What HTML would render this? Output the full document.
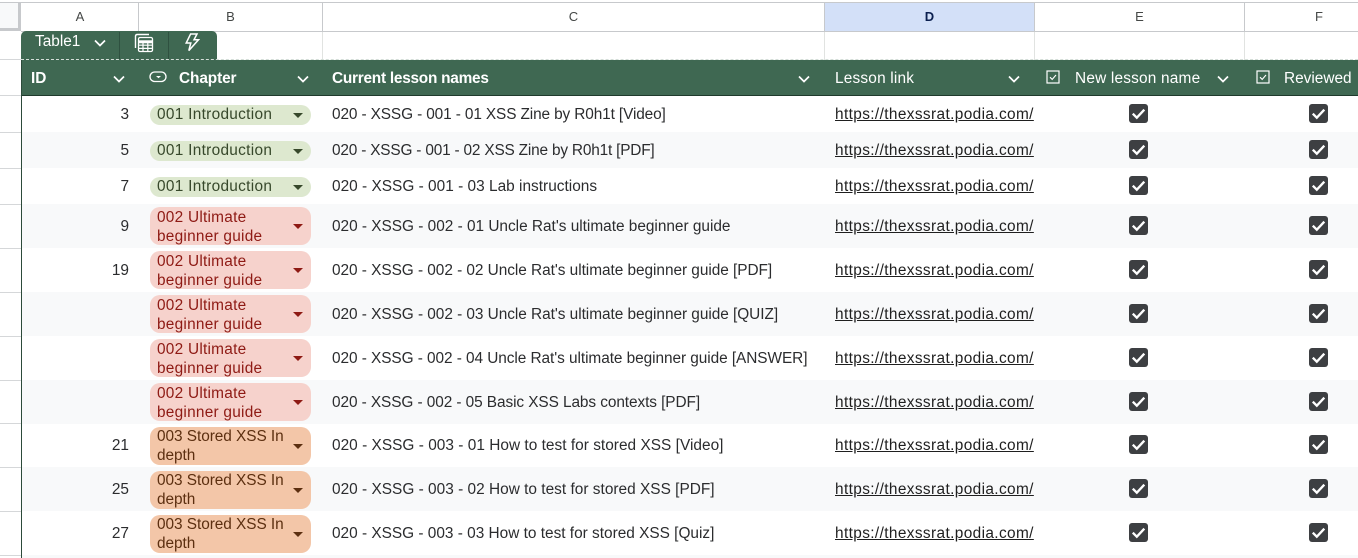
<!DOCTYPE html>
<html><head><meta charset="utf-8"><style>
html,body{margin:0;padding:0;width:1358px;height:558px;overflow:hidden;background:#fff}
body{position:relative;font-family:"Liberation Sans",sans-serif;color:#202124}
div,span,svg{position:absolute}
.l{background:#e1e3e1}.hl{background:#c7c9cc}
.cl{top:3px;height:28px;font-size:13px;line-height:28px;text-align:center;color:#444746}
.r{left:22px;width:1336px;overflow:hidden;height:36px;line-height:37px}
.r.w{height:44px;line-height:45px}
.r.s{background:#f8f9fa}
.t{font-size:15.4px;white-space:nowrap;color:#2b2c2e}
.id{width:107px;left:0;text-align:right}
.n{left:310px;letter-spacing:-.06px}
.u{left:813px;width:199px;overflow:hidden;text-decoration:underline;color:#1f1f1f;letter-spacing:.38px}
.p{left:128px;width:161px;border-radius:10px;font-size:15.4px;line-height:19px;white-space:nowrap}
.p span{left:7px;top:0}
.p i{position:absolute;right:8px;top:50%;margin-top:-2px;border:5px solid transparent;border-bottom:0;border-top-color:currentColor}
.g{background:#dde8cf;color:#37482b;height:20px;top:9px;line-height:20px;letter-spacing:.3px}
.d{background:#f6d2cc;color:#8e1a14;height:38px;top:3px;letter-spacing:.25px}
.o{background:#f3c6a8;color:#5c2f10;height:38px;top:4px;letter-spacing:-.05px}
.d span{top:1px}
.h{top:60px;left:21px;width:1337px;height:35px;background:#3f6852}
.ht{color:#fff;font-size:15.4px;line-height:38px;white-space:nowrap;top:0}
.b{font-weight:bold}
.cb{width:19px;height:19px;background:#3d3f42;border-radius:3px;top:8px}
.w .cb{top:12px}
.e{left:1107px}.f{left:1287px}
.gl{left:0;width:21px;height:1px;background:#d5d7d9}
</style></head><body>
<svg width="0" height="0" style="left:0;top:0"><defs>
<symbol id="chev" viewBox="0 0 12 8"><path d="M1 1.5 6 6.5 11 1.5" fill="none" stroke="#fff" stroke-width="1.7"/></symbol>
<symbol id="ck" viewBox="0 0 18 18"><path d="M3.6 9.2 7.4 13 14.5 5.4" fill="none" stroke="#fff" stroke-width="2.2"/></symbol>
<symbol id="hck" viewBox="0 0 14 14"><rect x="1" y="1" width="12" height="12" fill="none" stroke="#fff" stroke-width="1.2"/><path d="M4 7.2 6.2 9.4 10 5" fill="none" stroke="#fff" stroke-width="1.1"/></symbol>
</defs></svg>

<div style="left:0;top:2px;width:18px;height:26px;background:#f8f9fa;border-right:3px solid #c7c9cc;border-bottom:3px solid #c7c9cc"></div>
<div style="left:825px;top:3px;width:209px;height:28px;background:#d3e0f8"></div>
<div class="hl" style="left:0;top:2px;width:1358px;height:1px"></div>
<div class="hl" style="left:21px;top:31px;width:1337px;height:1px"></div>
<div class="cl" style="left:22px;width:116px">A</div>
<div class="cl" style="left:139px;width:183px">B</div>
<div class="cl" style="left:323px;width:501px">C</div>
<div class="cl" style="left:825px;width:209px;font-weight:bold;color:#0b1f4f">D</div>
<div class="cl" style="left:1035px;width:209px">E</div>
<div class="cl" style="left:1245px;width:148px">F</div>
<div class="hl" style="left:138px;top:3px;width:1px;height:28px"></div>
<div class="hl" style="left:322px;top:3px;width:1px;height:28px"></div>
<div class="hl" style="left:824px;top:3px;width:1px;height:28px"></div>
<div class="hl" style="left:1034px;top:3px;width:1px;height:28px"></div>
<div class="hl" style="left:1244px;top:3px;width:1px;height:28px"></div>
<div class="l" style="left:322px;top:32px;width:1px;height:28px"></div>
<div class="l" style="left:824px;top:32px;width:1px;height:28px"></div>
<div class="l" style="left:1034px;top:32px;width:1px;height:28px"></div>
<div class="l" style="left:1244px;top:32px;width:1px;height:28px"></div>

<div class="gl" style="top:59px"></div>
<div class="gl" style="top:95px"></div>
<div class="gl" style="top:132px"></div>
<div class="gl" style="top:168px"></div>
<div class="gl" style="top:204px"></div>
<div class="gl" style="top:248px"></div>
<div class="gl" style="top:292px"></div>
<div class="gl" style="top:336px"></div>
<div class="gl" style="top:380px"></div>
<div class="gl" style="top:423px"></div>
<div class="gl" style="top:467px"></div>
<div class="gl" style="top:511px"></div>
<div class="gl" style="top:555px"></div>

<div style="left:21px;top:31px;width:196px;height:29px;background:#3f6852;border-radius:5px 5px 0 0"></div>
<div style="left:119px;top:32px;width:1px;height:27px;background:#2f5140"></div>
<div style="left:168px;top:32px;width:1px;height:27px;background:#2f5140"></div>
<div class="ht" style="left:35px;top:23px">Table1</div>
<svg style="left:94px;top:39px" width="12" height="8"><use href="#chev"/></svg>
<svg style="left:134px;top:33px" width="20" height="20" viewBox="0 0 20 20" fill="none" stroke="#fff"><path d="M1.5 15V3.2Q1.5 1.5 3.2 1.5H15" stroke-width="1.4"/><rect x="4.5" y="4.5" width="14" height="14" rx="1.5" stroke-width="1.3"/><path d="M4.5 8.8H18.5" stroke-width="3"/><path d="M5 12.2H18M5 15.4H18M9 10V18M13.8 10V18" stroke-width="1.2"/></svg>
<svg style="left:184px;top:33px" width="16" height="19" viewBox="0 0 16 19" fill="none" stroke="#fff" stroke-width="1.5"><path d="M6.6 1H13L10 6.8H14.5L4.8 17.6 6.8 10H2.2Z"/></svg>

<div class="h"></div>
<div style="left:21px;top:59px;width:1337px;height:0;border-top:1px dashed #d4ded8"></div>
<div style="left:21px;top:95px;width:1337px;height:1px;background:#1f3a2c"></div>
<div style="left:21px;top:60px;width:1337px;height:36px">
<div class="ht b" style="left:10px">ID</div>
<svg style="left:92px;top:15px" width="12" height="8"><use href="#chev"/></svg>
<svg style="left:128px;top:10px" width="18" height="14" viewBox="0 0 18 14" fill="none" stroke="#fff" stroke-width="1.3"><rect x="1" y="2" width="16" height="9.5" rx="4.7"/><path d="M7 6H12L9.5 8.3Z" fill="#fff" stroke="none"/></svg>
<div class="ht b" style="left:158px;letter-spacing:-.1px">Chapter</div>
<svg style="left:276px;top:15px" width="12" height="8"><use href="#chev"/></svg>
<div class="ht b" style="left:311px;letter-spacing:-.25px">Current lesson names</div>
<svg style="left:777px;top:15px" width="12" height="8"><use href="#chev"/></svg>
<div class="ht" style="left:814px;letter-spacing:.2px">Lesson link</div>
<svg style="left:987px;top:15px" width="12" height="8"><use href="#chev"/></svg>
<svg style="left:1025px;top:10px" width="14" height="14"><use href="#hck"/></svg>
<div class="ht" style="left:1054px;letter-spacing:.2px">New lesson name</div>
<svg style="left:1196px;top:15px" width="12" height="8"><use href="#chev"/></svg>
<svg style="left:1235px;top:10px" width="14" height="14"><use href="#hck"/></svg>
<div class="ht" style="left:1263px">Reviewed</div>
</div>

<div class="r" style="top:96px">
<span class="t id">3</span><div class="p g"><span>001 Introduction</span><i></i></div><span class="t n" style="letter-spacing:-.12px">020 - XSSG - 001 - 01 XSS Zine by R0h1t [Video]</span><span class="t u">https://thexssrat.podia.com/</span><div class="cb e"><svg width="19" height="19"><use href="#ck"/></svg></div><div class="cb f"><svg width="19" height="19"><use href="#ck"/></svg></div></div>

<div class="r s" style="top:132px">
<span class="t id">5</span><div class="p g"><span>001 Introduction</span><i></i></div><span class="t n" style="letter-spacing:-.19px">020 - XSSG - 001 - 02 XSS Zine by R0h1t [PDF]</span><span class="t u">https://thexssrat.podia.com/</span><div class="cb e"><svg width="19" height="19"><use href="#ck"/></svg></div><div class="cb f"><svg width="19" height="19"><use href="#ck"/></svg></div></div>

<div class="r" style="top:168px">
<span class="t id">7</span><div class="p g"><span>001 Introduction</span><i></i></div><span class="t n" style="letter-spacing:.02px">020 - XSSG - 001 - 03 Lab instructions</span><span class="t u">https://thexssrat.podia.com/</span><div class="cb e"><svg width="19" height="19"><use href="#ck"/></svg></div><div class="cb f"><svg width="19" height="19"><use href="#ck"/></svg></div></div>

<div class="r w s" style="top:204px">
<span class="t id">9</span><div class="p d"><span>002 Ultimate<br>beginner guide</span><i></i></div><span class="t n" style="letter-spacing:-.01px">020 - XSSG - 002 - 01 Uncle Rat's ultimate beginner guide</span><span class="t u">https://thexssrat.podia.com/</span><div class="cb e"><svg width="19" height="19"><use href="#ck"/></svg></div><div class="cb f"><svg width="19" height="19"><use href="#ck"/></svg></div></div>

<div class="r w" style="top:248px">
<span class="t id">19</span><div class="p d"><span>002 Ultimate<br>beginner guide</span><i></i></div><span class="t n" style="letter-spacing:-.04px">020 - XSSG - 002 - 02 Uncle Rat's ultimate beginner guide [PDF]</span><span class="t u">https://thexssrat.podia.com/</span><div class="cb e"><svg width="19" height="19"><use href="#ck"/></svg></div><div class="cb f"><svg width="19" height="19"><use href="#ck"/></svg></div></div>

<div class="r w s" style="top:292px">
<div class="p d"><span>002 Ultimate<br>beginner guide</span><i></i></div><span class="t n" style="letter-spacing:-.04px">020 - XSSG - 002 - 03 Uncle Rat's ultimate beginner guide [QUIZ]</span><span class="t u">https://thexssrat.podia.com/</span><div class="cb e"><svg width="19" height="19"><use href="#ck"/></svg></div><div class="cb f"><svg width="19" height="19"><use href="#ck"/></svg></div></div>

<div class="r w" style="top:336px">
<div class="p d"><span>002 Ultimate<br>beginner guide</span><i></i></div><span class="t n">020 - XSSG - 002 - 04 Uncle Rat's ultimate beginner guide [ANSWER]</span><span class="t u">https://thexssrat.podia.com/</span><div class="cb e"><svg width="19" height="19"><use href="#ck"/></svg></div><div class="cb f"><svg width="19" height="19"><use href="#ck"/></svg></div></div>

<div class="r w s" style="top:380px">
<div class="p d"><span>002 Ultimate<br>beginner guide</span><i></i></div><span class="t n" style="letter-spacing:-.08px">020 - XSSG - 002 - 05 Basic XSS Labs contexts [PDF]</span><span class="t u">https://thexssrat.podia.com/</span><div class="cb e"><svg width="19" height="19"><use href="#ck"/></svg></div><div class="cb f"><svg width="19" height="19"><use href="#ck"/></svg></div></div>

<div class="r w" style="top:423px">
<span class="t id">21</span><div class="p o"><span>003 Stored XSS In<br>depth</span><i></i></div><span class="t n" style="letter-spacing:.03px">020 - XSSG - 003 - 01 How to test for stored XSS [Video]</span><span class="t u">https://thexssrat.podia.com/</span><div class="cb e"><svg width="19" height="19"><use href="#ck"/></svg></div><div class="cb f"><svg width="19" height="19"><use href="#ck"/></svg></div></div>

<div class="r w s" style="top:467px">
<span class="t id">25</span><div class="p o"><span>003 Stored XSS In<br>depth</span><i></i></div><span class="t n" style="letter-spacing:.02px">020 - XSSG - 003 - 02 How to test for stored XSS [PDF]</span><span class="t u">https://thexssrat.podia.com/</span><div class="cb e"><svg width="19" height="19"><use href="#ck"/></svg></div><div class="cb f"><svg width="19" height="19"><use href="#ck"/></svg></div></div>

<div class="r w" style="top:511px">
<span class="t id">27</span><div class="p o"><span>003 Stored XSS In<br>depth</span><i></i></div><span class="t n" style="letter-spacing:0">020 - XSSG - 003 - 03 How to test for stored XSS [Quiz]</span><span class="t u">https://thexssrat.podia.com/</span><div class="cb e"><svg width="19" height="19"><use href="#ck"/></svg></div><div class="cb f"><svg width="19" height="19"><use href="#ck"/></svg></div></div>

<div class="r s" style="top:555px;height:3px"></div>
<div style="left:21px;top:60px;width:1px;height:498px;background:#2c4a3a"></div>
</body></html>
